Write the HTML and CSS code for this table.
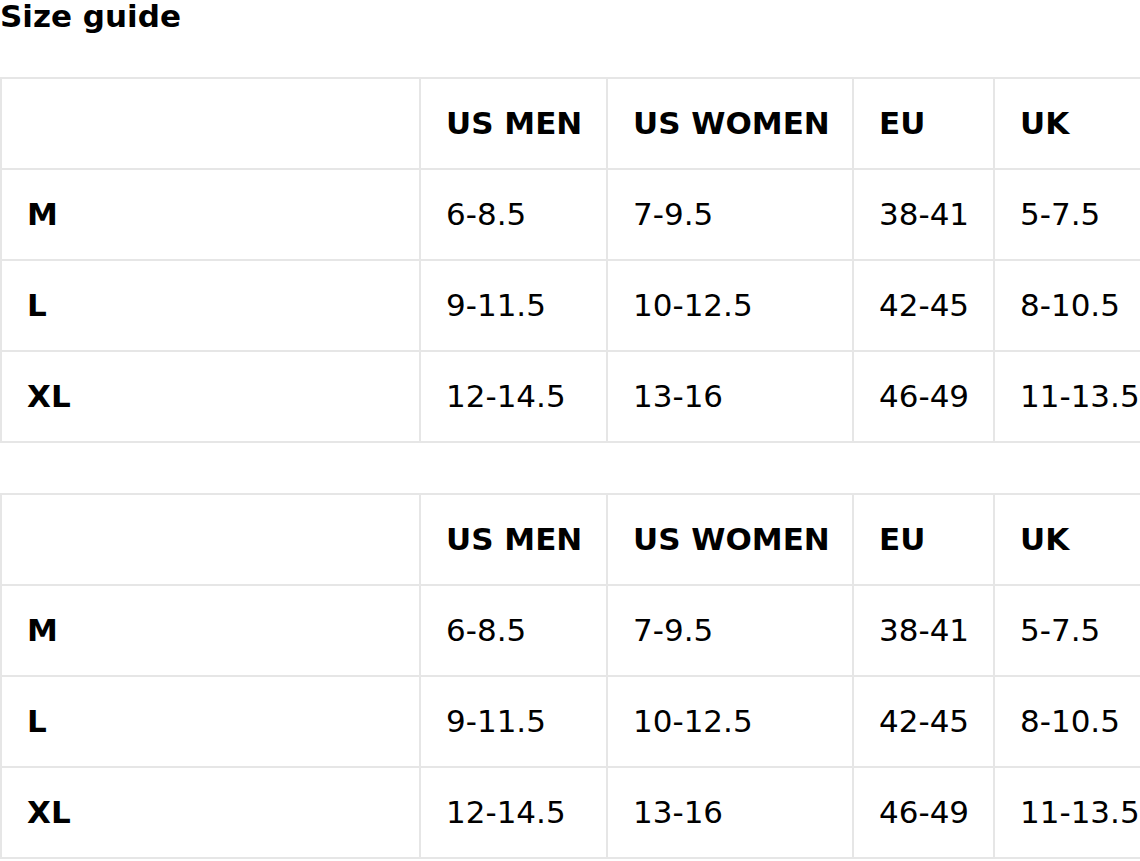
FILE: index.html
```html
<!DOCTYPE html>
<html lang="en">
<head>
<meta charset="utf-8">
<title>Size guide</title>
<link rel="stylesheet" href="styles.css">
</head>
<body>
<div class="page">
  <h2 class="title">Size guide</h2>
  <table class="sizes">
    <colgroup>
      <col class="c-size"><col class="c-men"><col class="c-women"><col class="c-eu"><col class="c-uk">
    </colgroup>
    <thead>
      <tr><th></th><th>US MEN</th><th>US WOMEN</th><th>EU</th><th>UK</th></tr>
    </thead>
    <tbody>
      <tr><th>M</th><td>6-8.5</td><td>7-9.5</td><td>38-41</td><td>5-7.5</td></tr>
      <tr><th>L</th><td>9-11.5</td><td>10-12.5</td><td>42-45</td><td>8-10.5</td></tr>
      <tr><th>XL</th><td>12-14.5</td><td>13-16</td><td>46-49</td><td>11-13.5</td></tr>
    </tbody>
  </table>
  <table class="sizes">
    <colgroup>
      <col class="c-size"><col class="c-men"><col class="c-women"><col class="c-eu"><col class="c-uk">
    </colgroup>
    <thead>
      <tr><th></th><th>US MEN</th><th>US WOMEN</th><th>EU</th><th>UK</th></tr>
    </thead>
    <tbody>
      <tr><th>M</th><td>6-8.5</td><td>7-9.5</td><td>38-41</td><td>5-7.5</td></tr>
      <tr><th>L</th><td>9-11.5</td><td>10-12.5</td><td>42-45</td><td>8-10.5</td></tr>
      <tr><th>XL</th><td>12-14.5</td><td>13-16</td><td>46-49</td><td>11-13.5</td></tr>
    </tbody>
  </table>
</div>
</body>
</html>
```
FILE: styles.css
```css
html, body {
  margin: 0;
  padding: 0;
  background: #ffffff;
  overflow: hidden;
}
.page {
  width: 1140px;
  overflow: hidden;
  font-family: "DejaVu Sans", sans-serif;
  color: #000000;
}
.title {
  margin: 0 0 45px 0;
  font-size: 31px;
  line-height: 32px;
  font-weight: bold;
}
.sizes {
  border-collapse: collapse;
  table-layout: fixed;
  width: 1163px;
  margin-bottom: 50px;
  font-size: 31px;
  line-height: 37px;
}
.c-size { width: 419px; }
.c-men { width: 187px; }
.c-women { width: 246px; }
.c-eu { width: 141px; }
.c-uk { width: 170px; }
.sizes th, .sizes td {
  border: 2px solid #e6e6e6;
  padding: 26px 24px 26px 25px;
  text-align: left;
  white-space: nowrap;
}
.sizes th { font-weight: bold; }
.sizes td { font-weight: normal; }
```
